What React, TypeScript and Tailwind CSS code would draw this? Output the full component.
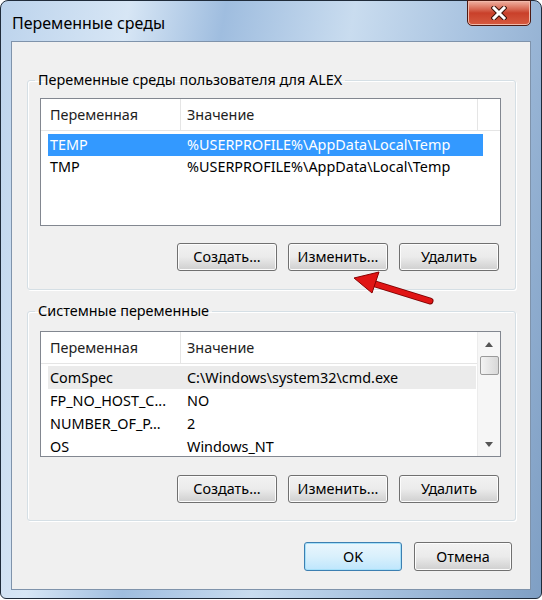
import React from "react";

function Btn({ label, w = "w-[100px]", h = "h-[28px]", def = false }: { label: string; w?: string; h?: string; def?: boolean }) {
  return (
    <div
      className={`${w} ${h} flex items-center justify-center rounded-[3px] border text-[14.4px] text-black ${
        def
          ? "border-[#3c7fb1] shadow-[inset_0_0_0_1px_#a6e0f9] bg-gradient-to-b from-[#eaf6fd] via-[#d9f0fc] to-[#bee6fd]"
          : "border-[#707070] shadow-[inset_0_0_0_1px_#fcfcfc] bg-gradient-to-b from-[#f2f2f2] via-[#ebebeb] to-[#cfcfcf]"
      }`}
    >
      {label}
    </div>
  );
}

function Row({ a, b, sel = false, hl = false, h = "h-[22px]", w = "w-[435px]" }: { a: string; b: string; sel?: boolean; hl?: boolean; h?: string; w?: string }) {
  return (
    <div className={`flex ${h} ${w} items-center text-[14.4px] ml-[7px] ${sel ? "bg-[#3399ff] text-white" : hl ? "bg-[#ebebeb] text-black" : "text-black"}`}>
      <div className="w-[133px] shrink-0 pl-[2px] whitespace-nowrap">{a}</div>
      <div className="pl-[6px] whitespace-nowrap">{b}</div>
    </div>
  );
}

function Group({ title, children, className = "" }: { title: string; children: React.ReactNode; className?: string }) {
  return (
    <fieldset className={`min-w-0 border border-[#d5dfe5] rounded-[3px] shadow-[inset_1px_1px_0_#fff,1px_1px_0_#fff] pl-[12px] pr-[14px] ${className}`}>
      <legend className="-ml-[5px] px-[3px] text-[14.4px] leading-[20px] text-black">{title}</legend>
      {children}
    </fieldset>
  );
}

export default function App() {
  return (
    <div className="relative w-[542px] h-[600px] overflow-hidden bg-white font-['Noto_Sans',sans-serif]">
      <div className="w-[542px] h-[599px] flex flex-col rounded-t-[8px] rounded-b-[6px] border border-[#1f2b3a] bg-[linear-gradient(100deg,#bcd3ec_0%,#d7e6f5_20%,#9fbddf_35%,#c9dcef_55%,#a6c1df_75%,#7f9fc4_100%)] px-[10px] pb-[8px]">
        <div className="h-[40px] flex items-start justify-between shrink-0">
          <div className="pt-[10px] pl-[1px] text-[16px] text-black">Переменные среды</div>
          <div className="w-[64px] h-[26px] -mt-px rounded-b-[5px] border border-[#4d1a12] bg-gradient-to-b from-[#eeb1a2] via-[#c9402a] to-[#d65a40] flex items-center justify-center shadow-[inset_0_0_0_1px_#f1b9aa]">
            <svg width="16" height="14" viewBox="0 0 16 14">
              <path d="M3 2 L13 12 M13 2 L3 12" stroke="#3a1108" strokeWidth="5" strokeLinecap="square" />
              <path d="M3 2 L13 12 M13 2 L3 12" stroke="#ffffff" strokeWidth="3" strokeLinecap="square" />
            </svg>
          </div>
        </div>
        <div className="flex-1 flex flex-col bg-[#f0f0f0] border border-[#7f93ab] pl-[15px] pr-[14px]">
          <Group title="Переменные среды пользователя для ALEX" className="mt-[28px] pb-[18px]">
            <div className="mt-[8px] h-[128px] border border-[#828790] bg-white overflow-hidden">
              <div className="flex h-[32px] border-b border-[#e5e5e5] bg-white text-[14.4px] text-[#1e1e1e]">
                <div className="w-[140px] shrink-0 pl-[9px] flex items-center border-r border-[#e5e5e5]">Переменная</div>
                <div className="w-[297px] shrink-0 pl-[6px] flex items-center border-r border-[#e5e5e5]">Значение</div>
                <div className="flex-1" />
              </div>
              <div className="h-[3px]" />
              <Row a="TEMP" b="%USERPROFILE%\AppData\Local\Temp" sel />
              <Row a="TMP" b="%USERPROFILE%\AppData\Local\Temp" />
            </div>
            <div className="mt-[17px] flex justify-end gap-[11px] pr-[2px]">
              <Btn label="Создать..." />
              <Btn label="Изменить..." />
              <Btn label="Удалить" />
            </div>
          </Group>
          <Group title="Системные переменные" className="mt-[11px] pb-[17px]">
            <div className="mt-[10px] h-[126px] border border-[#828790] bg-white overflow-hidden flex">
              <div className="flex-1 min-w-0">
                <div className="flex h-[32px] border-b border-[#e5e5e5] bg-white text-[14.4px] text-[#1e1e1e]">
                  <div className="w-[140px] shrink-0 pl-[9px] flex items-center border-r border-[#e5e5e5]">Переменная</div>
                  <div className="flex-1 pl-[6px] flex items-center">Значение</div>
                </div>
                <div className="h-[2px]" />
                <Row a="ComSpec" b="C:\Windows\system32\cmd.exe" hl h="h-[23px]" w="w-[428px]" />
                <Row a="FP_NO_HOST_C..." b="NO" h="h-[23px]" w="w-[428px]" />
                <Row a="NUMBER_OF_P..." b="2" h="h-[23px]" w="w-[428px]" />
                <Row a="OS" b="Windows_NT" h="h-[23px]" w="w-[428px]" />
              </div>
              <div className="w-[23px] shrink-0 bg-[#f6f6f6] border-l border-[#ececec] flex flex-col items-center">
                <div className="h-[24px] flex items-center justify-center">
                  <svg width="8" height="5" viewBox="0 0 8 5"><path d="M0 5 L4 0 L8 5 Z" fill="#555" /></svg>
                </div>
                <div className="w-[19px] h-[19px] rounded-[2px] border border-[#9a9a9a] bg-gradient-to-r from-[#f3f3f3] to-[#d8d8d8]" />
                <div className="flex-1" />
                <div className="h-[24px] flex items-center justify-center">
                  <svg width="8" height="5" viewBox="0 0 8 5"><path d="M0 0 L4 5 L8 0 Z" fill="#555" /></svg>
                </div>
              </div>
            </div>
            <div className="mt-[18px] flex justify-end gap-[11px] pr-[2px]">
              <Btn label="Создать..." />
              <Btn label="Изменить..." />
              <Btn label="Удалить" />
            </div>
          </Group>
          <div className="mt-[21px] flex justify-end gap-[12px] pr-[4px]">
            <Btn label="OK" w="w-[98px]" h="h-[29px]" def />
            <Btn label="Отмена" w="w-[98px]" h="h-[29px]" />
          </div>
        </div>
      </div>
      <svg className="absolute left-[350px] top-[270px]" width="90" height="40" viewBox="350 270 90 40">
        <path d="M430 301 L372 283" stroke="#7a0000" strokeWidth="7" strokeLinecap="round" />
        <path d="M430 301 L372 283" stroke="#e01515" strokeWidth="5" strokeLinecap="round" />
        <path d="M354 278 L379 272 L372 293 Z" fill="#e01515" stroke="#8a0000" strokeWidth="1" />
      </svg>
    </div>
  );
}
